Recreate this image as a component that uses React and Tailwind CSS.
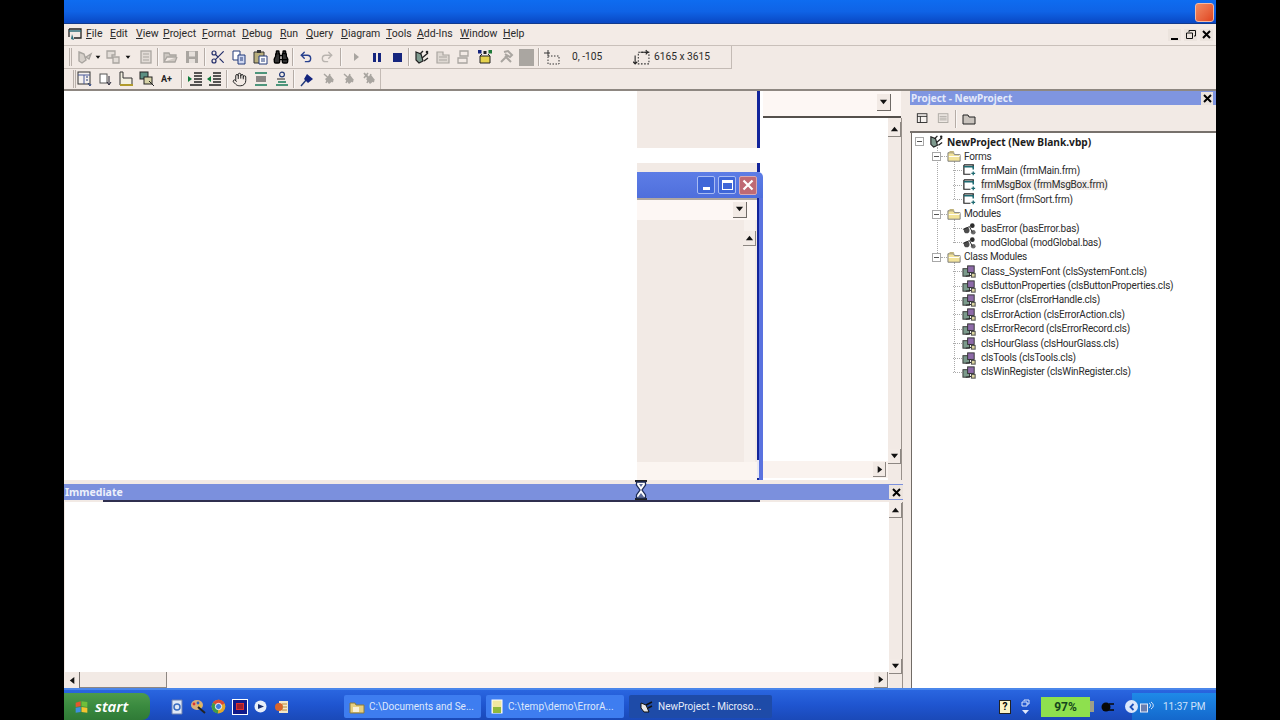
import React from 'react';
import { Scissors, Binoculars, Undo2, Redo2, Hand } from 'lucide-react';

const U = ({ children }) => <span className="underline underline-offset-1">{children}</span>;

const menu = [
  ['w-[24px]', 'F', 'ile'], ['w-[26px]', 'E', 'dit'], ['w-[27px]', 'V', 'iew'], ['w-[39px]', 'P', 'roject'],
  ['w-[40px]', 'F', 'ormat'], ['w-[38px]', 'D', 'ebug'], ['w-[26px]', 'R', 'un'], ['w-[35px]', 'Q', 'uery'],
  ['w-[45px]', 'D', 'iagram'], ['w-[31px]', 'T', 'ools'], ['w-[43px]', 'A', 'dd-Ins'], ['w-[43px]', 'W', 'indow'], ['w-[24px]', 'H', 'elp'],
];

const S = ({ children, className = 'w-[21px]' }) => <div className={`flex h-[22px] shrink-0 items-center justify-center ${className}`}>{children}</div>;
const Sep = ({ className = '' }) => <div className={`h-[18px] w-[2px] shrink-0 border-l border-[#b5aca6] bg-white/60 ${className}`} />;
const Grip = () => <div className="ml-[2px] h-[18px] w-[3px] shrink-0 border-l border-r border-[#b9b0aa]" />;
const Svg = ({ children, s = 16 }) => <svg width={s} height={s} viewBox="0 0 16 16" fill="none">{children}</svg>;
const Arrow = ({ dir = 'down', className = '' }) => {
  const p = { down: 'M1 2h8L5 7z', up: 'M1 7h8L5 2z', left: 'M7 1v8L2 5z', right: 'M3 1v8l5-4z' }[dir];
  return <svg width="9" height="9" viewBox="0 0 10 10" className={className}><path d={p} fill="#111" /></svg>;
};
const Grey = '#a9a5a0';
const IProj = () => <Svg><path d="M2 3l5 2 2 6-4 3-3-2zM9 8l5-3-2 5z" stroke={Grey} strokeWidth="1.4" fill="#d6d0ca" /></Svg>;
const IForm = () => <Svg><path d="M2 2h8v4H7v3H2zM8 8h6v6H8z" stroke={Grey} strokeWidth="1.3" fill="#e2dcd7" /></Svg>;
const IMenu = () => <Svg><rect x="3" y="2" width="10" height="12" stroke={Grey} strokeWidth="1.3" fill="#e2dcd7" /><path d="M5 5h6M5 8h6M5 11h6" stroke={Grey} /></Svg>;
const IOpen = () => <Svg><path d="M1 13V4h5l1 2h6v2H4l-3 5h11l2-5" stroke={Grey} strokeWidth="1.3" fill="#cfc9c3" /></Svg>;
const ISave = () => <Svg><path d="M2 2h12v12H2z" fill={Grey} /><rect x="5" y="2.5" width="6" height="5" fill="#e6e0db" /><rect x="5" y="10" width="6" height="4" fill="#e6e0db" /></Svg>;
const ICopy = () => <Svg><path d="M2 2h7v9H2z" fill="#fff" stroke="#223a7a" /><path d="M7 6h7v9H7z" fill="#cfd7f0" stroke="#223a7a" /><path d="M9 9h3M9 11h3" stroke="#223a7a" /></Svg>;
const IPaste = () => <Svg><path d="M2 3h10v11H2z" fill="#b9ae7c" stroke="#333" /><rect x="5" y="1" width="4" height="3" fill="#333" /><path d="M7 7h8v8H7z" fill="#fff" stroke="#223a7a" /><path d="M9 10h4M9 12h4" stroke="#223a7a" /></Svg>;
const IPlay = () => <Svg><path d="M6 4v8l5-4z" fill={Grey} /></Svg>;
const IPause = () => <Svg><path d="M4 4h3v9H4zM9 4h3v9H9z" fill="#15257e" /></Svg>;
const IStop = () => <Svg><rect x="4" y="4" width="9" height="9" fill="#15257e" /></Svg>;
const IProjC = ({ s = 16 }) => <Svg s={s}><path d="M2 3l5 2 2 7-4 2-3-3z" fill="#7e9a8e" stroke="#222" strokeWidth="1.2" /><path d="M8 9l6-5M6 5l3-3M10 12l4-3" stroke="#222" strokeWidth="1.4" /><circle cx="13" cy="3" r="1.3" fill="#222" /></Svg>;
const IProps = () => <Svg><path d="M2 3h6v3h6v8H2z" stroke={Grey} strokeWidth="1.2" fill="#ded8d2" /><path d="M4 8h8M4 11h8" stroke={Grey} /></Svg>;
const IWin = () => <Svg><path d="M4 2h8v5H4zM2 9h9v5H2z" stroke={Grey} strokeWidth="1.3" /></Svg>;
const IBox = () => <Svg><path d="M3 7h10v7H3z" fill="#e5d24d" stroke="#222" /><path d="M3 7l2-2M13 7l-2-2" stroke="#222" /><rect x="1" y="1" width="3.5" height="3.5" fill="#15257e" /><rect x="6.5" y="2" width="3" height="3" fill="#222" /><rect x="11.5" y="1" width="3.5" height="3.5" fill="#1f7a3a" /></Svg>;
const IHammer = () => <Svg><path d="M3 13L10 6M6 3l4-1 4 4-2 2-5-3M13 13L7 7" stroke={Grey} strokeWidth="2" /></Svg>;
const IBlock = () => <svg width="15" height="17" viewBox="0 0 15 17"><rect width="15" height="17" fill="#aaa6a1" /></svg>;
const IPos = () => <Svg><path d="M0 4h6M4 1v6" stroke="#333" /><path d="M4 7h11v8H4z" stroke="#333" strokeDasharray="1.5 1.5" /></Svg>;
const ISize = () => <Svg s={17}><path d="M5 3h10v11H5z" stroke="#333" strokeDasharray="1.5 1.5" /><path d="M7 3h8M12 1l2 2-2 2M2 6v8M0 12l2 2 2-2" stroke="#222" /></Svg>;

const T2a = () => <Svg><rect x="2" y="1" width="12" height="12" fill="#f5f1ee" stroke="#333" /><path d="M2 4h12M8 4v9" stroke="#4a5a9a" /><path d="M10 6h2M10 9h2M12 12l2 3 1-2" stroke="#223a7a" /></Svg>;
const T2b = () => <Svg><rect x="3" y="3" width="7" height="9" fill="#fff" stroke="#555" /><path d="M12 5v8M10 11l2 3 2-3" stroke="#223" /></Svg>;
const T2c = () => <Svg><path d="M2 1h3v6h9v7H2z" fill="#f2efe0" stroke="#333" /><path d="M2 14h13" stroke="#b09a2c" strokeWidth="2" /></Svg>;
const T2d = () => <Svg><rect x="1" y="1" width="8" height="7" fill="#5b8f82" stroke="#222" /><rect x="5" y="6" width="8" height="7" fill="#d7d3a8" stroke="#222" /><path d="M10 10l5 5" stroke="#222" /></Svg>;
const IIndent = ({ out }) => <Svg><path d="M7 2h8M7 5h8M7 8h8M7 11h8M3 14h12" stroke="#222" strokeWidth="1.3" /><path d={out ? 'M5 5L1 8l4 3z' : 'M1 5l4 3-4 3z'} fill="#117a3c" /></Svg>;
const ILines = () => <Svg><path d="M2 2h12M2 14h12" stroke="#177a58" strokeWidth="1.6" /><path d="M3 6h10M3 8h10M3 10h10" stroke="#222" /></Svg>;
const IQuick = () => <Svg><path d="M2 14h12M4 11h8" stroke="#177a58" strokeWidth="1.6" /><path d="M3 8h8" stroke="#222" /><circle cx="8" cy="3.5" r="2.4" stroke="#223a7a" strokeWidth="1.2" /></Svg>;
const IBm = ({ grey }) => <Svg><path d="M2 15L8 8" stroke={grey ? Grey : '#223a7a'} strokeWidth="1.4" /><path d="M8 3l6 5-5 4-4-4z" fill={grey ? Grey : '#15257e'} /></Svg>;
const IGreyBm = ({ x }) => <Svg><path d="M4 3l9 8M6 12l4-9" stroke={Grey} strokeWidth="1.5" /><path d="M5 8l5-4 4 5-5 4z" fill={Grey} />{x && <path d="M3 2l4 5M7 2L3 7" stroke={Grey} strokeWidth="1.6" />}</Svg>;

const Folder = () => <Svg s={15}><path d="M1 4h6l1 2h6v7H1z" fill="#f2e39a" stroke="#777" /><path d="M2 4l1-2h4l1 2z" fill="#bfb27a" /><path d="M2 8h11l1-2" stroke="#fff" /></Svg>;
const FormI = () => <Svg s={15}><path d="M2 2h10v3M2 2v10h7" stroke="#222" strokeWidth="1.3" /><path d="M2 4h10v3" stroke="#1f6b72" strokeWidth="1.6" /><path d="M12 9v4M10 11h4" stroke="#1f6b72" strokeWidth="1.4" /></Svg>;
const ModI = () => <Svg s={15}><circle cx="5" cy="10" r="3" fill="#4c4c4c" /><circle cx="11" cy="5" r="2.5" fill="#2c2c2c" /><circle cx="12" cy="12" r="2.5" fill="#6a6a6a" /><path d="M1 9l7-3M8 6l3 6" stroke="#222" strokeWidth="1" /></Svg>;
const ClsI = () => <Svg s={15}><rect x="1" y="5" width="7" height="8" fill="#7b9a8b" stroke="#333" /><rect x="6" y="2" width="7" height="7" fill="#8d6aa8" stroke="#333" /><path d="M9 9l5 5M4 13l7-1" stroke="#222" /><rect x="10" y="10" width="4" height="4" fill="#dcd6a0" stroke="#444" /></Svg>;

const forms = [['frmMain (frmMain.frm)', false], ['frmMsgBox (frmMsgBox.frm)', true], ['frmSort (frmSort.frm)', false]];
const mods = ['basError (basError.bas)', 'modGlobal (modGlobal.bas)'];
const clss = ['Class_SystemFont (clsSystemFont.cls)', 'clsButtonProperties (clsButtonProperties.cls)', 'clsError (clsErrorHandle.cls)', 'clsErrorAction (clsErrorAction.cls)', 'clsErrorRecord (clsErrorRecord.cls)', 'clsHourGlass (clsHourGlass.cls)', 'clsTools (clsTools.cls)', 'clsWinRegister (clsWinRegister.cls)'];

const Box = () => <div className="flex h-[9px] w-[9px] shrink-0 items-center justify-center border border-[#a8a8a8] bg-white"><div className="h-px w-[5px] bg-[#555]" /></div>;
const Dash = ({ className }) => <div className={`shrink-0 border-t border-dotted border-[#aaa] ${className}`} />;

const Group = ({ label }) => (
  <div className="flex h-[14.4px] items-center pl-[19px]">
    <Box /><Dash className="w-[6px]" /><Folder /><span className="ml-[2px]">{label}</span>
  </div>
);
const Leaf = ({ icon, label, hi }) => (
  <div className="flex h-[14.4px] items-center pl-[40px]">
    <Dash className="w-[9px]" />{icon}<span className={`ml-[4px] whitespace-nowrap ${hi ? 'bg-[#f4eeea]' : ''}`}>{label}</span>
  </div>
);

const ScrollBtn = ({ dir }) => <div className="flex h-[15px] w-[13px] shrink-0 items-center justify-center border-r border-b border-[#8d8782] bg-[#f3ebe6]"><Arrow dir={dir} /></div>;

const Flag = () => <svg width="15" height="16" viewBox="0 0 18 18"><path d="M2 4l6-2v6L2 9z" fill="#e4572e" /><path d="M9 2l7 1v6l-7-1z" fill="#6fbf3a" /><path d="M2 10l6-1v6l-6 1z" fill="#3f8fe0" /><path d="M9 9l7 1v6l-7-1z" fill="#f5c430" /></svg>;
const QL = ({ children }) => <div className="flex h-[20px] w-[21px] shrink-0 items-center justify-center">{children}</div>;
const TaskBtn = ({ icon, label, active, className }) => (
  <div className={`flex h-[23px] shrink-0 items-center rounded-[2px] pl-[5px] text-[10px] ${active ? 'bg-[#1e4ba8] text-[#e6ecfa]' : 'bg-[#3e7df0] text-[#dfe8fb]'} ${className}`}>
    {icon}<span className="ml-[4px] whitespace-nowrap">{label}</span>
  </div>
);

export default function App() {
  return (
    <div className="flex h-[720px] w-[1280px] overflow-hidden bg-black font-['Roboto',sans-serif] text-[10px] leading-none text-[#2a2a2a]">
      <div className="w-[64px] shrink-0" />
      <div className="flex w-[1152px] shrink-0 flex-col bg-[#f2eae5]">
        {/* title bar */}
        <div className="flex h-[24px] shrink-0 items-start justify-end border-b border-[#123a8c] bg-gradient-to-b from-[#0e6cf0] via-[#0f63e6] to-[#0a48c4] pr-[2px] pt-[3px]">
          <div className="h-[19px] w-[19px] rounded-[3px] border border-[#f4b9a4] bg-gradient-to-br from-[#f08a63] to-[#e0431c]" />
        </div>
        {/* menu */}
        <div className="flex h-[22px] shrink-0 items-center border-b border-[#c9c0ba] bg-[#f3ebe6] pl-[4px] text-[10.5px]">
          <svg width="14" height="14" viewBox="0 0 14 14" className="mr-[4px] shrink-0"><path d="M1 1h12v9H6M1 1v8" stroke="#222" strokeWidth="1.3" fill="none" /><path d="M1 3h12" stroke="#2c6e7a" strokeWidth="1.5" /><path d="M4 6l2 6-3-1z" fill="#2c6e7a" /></svg>
          {menu.map(([w, a, b], i) => <div key={i} className={`${w} shrink-0`}><U>{a}</U>{b}</div>)}
          <div className="flex-1" />
          <div className="mr-[3px] flex items-center gap-[3px]">
            <div className="flex h-[12px] w-[13px] items-end justify-center bg-[#ece4de] pb-[1px]"><div className="h-[2px] w-[7px] bg-black" /></div>
            <div className="flex h-[12px] w-[13px] items-center justify-center bg-[#ece4de]"><svg width="10" height="9" viewBox="0 0 10 9" fill="none"><path d="M3 2V0.5h6.5V6H8M0.5 3h6v5.5h-6z" stroke="#111" /></svg></div>
            <div className="flex h-[12px] w-[13px] items-center justify-center bg-[#ece4de]"><svg width="9" height="9" viewBox="0 0 9 9"><path d="M1 1l7 7M8 1L1 8" stroke="#000" strokeWidth="2" /></svg></div>
          </div>
        </div>
        {/* toolbar 1 */}
        <div className="flex h-[23px] shrink-0 items-center">
          <div className="flex h-[23px] w-[668px] shrink-0 items-center border-r border-b border-[#c4bbb5] pl-[3px] text-[10.2px]">
            <Grip />
            <S className="ml-[2px] w-[21px]"><IProj /></S><S className="w-[6px]"><Arrow /></S>
            <S className="ml-[2px] w-[20px]"><IForm /></S><S className="ml-[2px] w-[6px]"><Arrow /></S>
            <S className="ml-[4px] w-[21px]"><IMenu /></S><Sep className="mx-[1px]" />
            <S><IOpen /></S><S><ISave /></S><Sep className="ml-[2px] mr-[1px]" />
            <S><Scissors size={16} color="#222d6a" strokeWidth={1.8} /></S><S><ICopy /></S><S><IPaste /></S><S><Binoculars size={16} color="#000" fill="#333" strokeWidth={2} /></S><Sep className="mx-[1px]" />
            <S><Undo2 size={14} color="#27408e" strokeWidth={2.4} /></S><S><Redo2 size={14} color="#b9b4af" strokeWidth={2.4} /></S><Sep className="mx-[3px]" />
            <S className="w-[21px]"><IPlay /></S><S><IPause /></S><S className="w-[20px]"><IStop /></S><Sep className="mx-[1px]" />
            <S><IProjC /></S><S><IProps /></S><S><IWin /></S><S><IBox /></S><S><IHammer /></S><S><IBlock /></S><Sep className="mx-[1px]" />
            <S className="w-[21px]"><IPos /></S>
            <div className="ml-[10px] w-[58px] shrink-0">0, -105</div>
            <S className="w-[22px]"><ISize /></S>
            <div className="ml-[2px] whitespace-nowrap">6165 x 3615</div>
          </div>
        </div>
        {/* toolbar 2 */}
        <div className="flex h-[22px] shrink-0 items-center border-b-2 border-[#8e8781]">
          <div className="flex h-[20px] w-[317px] shrink-0 items-center border-r border-[#c4bbb5] pl-[7px]">
            <Grip />
            <S className="w-[17px] ml-[-1px]"><T2a /></S><S className="ml-[2px] w-[21px]"><T2b /></S><S><T2c /></S><S><T2d /></S>
            <S className="w-[19px] text-[9px] font-bold text-[#222]">A+</S><Sep className="mx-[5px]" />
            <S className="ml-[-1px]"><IIndent /></S><S><IIndent out /></S><Sep className="mx-[1.5px]" />
            <S><Hand size={15} color="#222" strokeWidth={1.6} /></S><S><ILines /></S><S><IQuick /></S><Sep className="mx-[1px]" />
            <S><IBm /></S><S><IGreyBm /></S><S className="w-[20px]"><IGreyBm /></S><S><IGreyBm x /></S>
          </div>
        </div>
        {/* main */}
        <div className="flex min-h-0 flex-1">
          <div className="flex w-[846px] shrink-0 flex-col">
            {/* MDI area */}
            <div className="flex h-[389px] shrink-0 bg-white">
              <div className="ml-px w-[572px] shrink-0 bg-white" />
              <div className="flex w-[126px] shrink-0 flex-col">
                <div className="flex h-[81px] shrink-0">
                  <div className="flex w-[120px] flex-col">
                    <div className="h-[57px] bg-[#f2eae5]" />
                    <div className="h-[15px] bg-white" />
                    <div className="flex-1 bg-[#f2eae5]" />
                  </div>
                  <div className="flex w-[3px] flex-col">
                    <div className="h-[57px] bg-[#12249a]" />
                    <div className="h-[15px] bg-white" />
                    <div className="flex-1 bg-[#12249a]" />
                  </div>
                </div>
                <div className="flex h-[26px] shrink-0 items-center justify-end gap-[3px] rounded-tr-[5px] bg-gradient-to-b from-[#5d7de6] to-[#4f6fdc] pr-[6px]">
                  <div className="flex h-[18px] w-[18px] items-end justify-center rounded-[2px] border border-[#a9bcf3] bg-[#3f66d8] pb-[3px]"><div className="h-[3px] w-[7px] bg-white" /></div>
                  <div className="flex h-[18px] w-[18px] items-center justify-center rounded-[2px] border border-[#a9bcf3] bg-[#3f66d8]"><div className="h-[10px] w-[11px] border border-t-[3px] border-white" /></div>
                  <div className="flex h-[19px] w-[18px] items-center justify-center rounded-[2px] border border-[#d9a9b0] bg-[#bf6a74]"><svg width="12" height="12" viewBox="0 0 12 12"><path d="M1.5 1.5l9 9M10.5 1.5l-9 9" stroke="#fff" strokeWidth="2.2" /></svg></div>
                </div>
                <div className="flex min-h-0 flex-1">
                  <div className="flex w-[120px] shrink-0 flex-col">
                    <div className="flex h-[22px] shrink-0 items-center justify-end border-t-2 border-[#b0a8a2] bg-[#fdf7f4] pr-[10px]">
                      <div className="flex h-[16px] w-[14px] items-center justify-center border-r border-b border-[#6f6a66] bg-[#f2eae5]"><Arrow /></div>
                    </div>
                    <div className="flex h-[242px] shrink-0 justify-end bg-[#f2eae5] pr-[2px]">
                      <div className="flex w-[11px] flex-col items-center bg-[#f7f1ed] pt-[11px]"><ScrollBtn dir="up" /></div>
                    </div>
                    <div className="flex-1 bg-[#fbf5f1]" />
                  </div>
                  <div className="flex w-[6px] shrink-0">
                    <div className="flex h-full w-[2px] flex-col">
                      <div className="flex-1 bg-[#12249a]" />
                      <div className="h-[18px] bg-[#e8e8f4]" />
                      <div className="h-[2px] bg-[#12249a]" />
                    </div>
                    <div className="h-full w-[4px] bg-[#5a72df]" />
                  </div>
                </div>
              </div>
              {/* code window right */}
              <div className="flex w-[147px] shrink-0 flex-col">
                <div className="flex h-[27px] shrink-0">
                  <div className="flex w-[138px] shrink-0 items-center border-b-2 border-[#55504c] bg-[#fdf7f4] pb-[3px]">
                    <div className="flex w-[128px] justify-end pt-[1px]">
                      <div className="flex h-[17px] w-[14px] items-center justify-center border-r border-b border-[#6f6a66] bg-[#f2eae5]"><Arrow /></div>
                    </div>
                  </div>
                  <div className="flex-1 bg-[#f2eae5]" />
                </div>
                <div className="flex min-h-0 flex-1">
                  <div className="flex w-[125px] shrink-0 flex-col">
                    <div className="flex-1 bg-white" />
                    <div className="mb-[2px] flex h-[17px] shrink-0 items-center justify-end bg-[#faf3ef] pr-[2px]">
                      <div className="flex h-[15px] w-[13px] items-center justify-center border-r border-b border-[#8d8782] bg-[#f2eae5]"><Arrow dir="right" /></div>
                    </div>
                  </div>
                  <div className="flex w-[13px] shrink-0 flex-col items-center bg-[#f2eae5] pb-[16px] pt-[4px]">
                    <ScrollBtn dir="up" />
                    <div className="flex-1" />
                    <ScrollBtn dir="down" />
                  </div>
                  <div className="w-px shrink-0 bg-[#99918b]" />
                  <div className="flex-1 bg-[#f2eae5]" />
                </div>
              </div>
            </div>
            {/* strip + immediate */}
            <div className="relative flex min-h-0 flex-1 flex-col pt-[4px]">
              <svg width="14" height="20" viewBox="0 0 14 20" className="absolute left-[570px] top-0">
                <path d="M1 1h12M1 19h12" stroke="#222" strokeWidth="2" />
                <path d="M2.5 2h9v3L8 10l3.5 5v3h-9v-3L6 10 2.5 5z" fill="#fff" stroke="#1b2a55" strokeWidth="1.3" />
                <path d="M4 17h6l-3-4zM5 4h4L7 7z" fill="#5a6a9a" />
              </svg>
              <div className="mr-[7px] flex h-[16px] shrink-0 items-center bg-[#7b90dd]">
                <div className="ml-px flex-1 font-['Noto_Sans',sans-serif] text-[10.5px] font-bold text-[#eef1fb]">Immediate</div>
                <div className="flex h-[14px] w-[14px] items-center justify-center bg-[#ece4de]"><svg width="9" height="9" viewBox="0 0 9 9"><path d="M1 1l7 7M8 1L1 8" stroke="#000" strokeWidth="2" /></svg></div>
              </div>
              <div className="flex h-[2px] shrink-0">
                <div className="ml-[39px] h-[2px] w-[657px] bg-[#2f2f4f]" />
              </div>
              <div className="flex min-h-0 flex-1">
                <div className="ml-px flex w-[824px] shrink-0 flex-col">
                  <div className="flex-1 bg-white" />
                  <div className="flex h-[16px] shrink-0 items-center bg-[#fbf3f0]">
                    <div className="flex h-[16px] w-[15px] items-center justify-center border-r border-[#77726e] bg-[#f2eae5]"><Arrow dir="left" /></div>
                    <div className="h-[16px] w-[87px] border-r border-b border-[#8d8782] bg-[#f2eae5]" />
                    <div className="flex-1" />
                    <div className="mr-[1px] flex h-[16px] w-[14px] items-center justify-center border-r border-b border-[#8d8782] bg-[#f2eae5]"><Arrow dir="right" /></div>
                  </div>
                </div>
                <div className="flex w-[13px] shrink-0 flex-col items-center bg-[#f2eae5] pb-[14px] pt-px">
                  <ScrollBtn dir="up" />
                  <div className="flex-1" />
                  <ScrollBtn dir="down" />
                </div>
                <div className="w-px shrink-0 bg-[#99918b]" />
                <div className="flex-1 bg-[#f2eae5]" />
              </div>
            </div>
          </div>
          {/* project panel */}
          <div className="flex w-[306px] shrink-0 flex-col">
            <div className="flex h-[14px] shrink-0 items-center justify-between bg-[#7f95e0] pl-px pr-[3px] font-['Noto_Sans',sans-serif] text-[10px] font-bold text-[#e4e9fa]">
              <span className="-mt-[1px]">Project - NewProject</span>
              <div className="flex h-[13px] w-[12px] items-center justify-center bg-[#ece4de]"><svg width="9" height="9" viewBox="0 0 9 9"><path d="M1 1l7 7M8 1L1 8" stroke="#000" strokeWidth="2" /></svg></div>
            </div>
            <div className="flex h-[28px] shrink-0 items-center border-b-2 border-[#77716c] pl-[2px] pt-[2px]">
              <S><Svg s={14}><rect x="1.5" y="2" width="11" height="10" fill="#f5f1ee" stroke="#222" /><path d="M1.5 5h11M5 5v7" stroke="#222" /></Svg></S>
              <S><Svg s={14}><rect x="1.5" y="2" width="11" height="10" fill="#eee8e3" stroke={Grey} /><path d="M3 5h8M3 7h8M3 9h8" stroke={Grey} /></Svg></S>
              <Sep className="mx-[1px]" />
              <S className="w-[21px]"><Svg><path d="M2 4h5l1 2h6v7H2z" fill="#c9c3bd" stroke="#222" /></Svg></S>
            </div>
            <div className="min-h-0 flex-1 pl-[1px]">
              <div className="relative h-full border-l border-[#716b66] bg-white pl-px pt-[1px] tracking-[-0.2px] text-[#2c2c2c]">
                <div className="absolute left-[25px] top-[14px] h-[106px] border-l border-dotted border-[#aaa]" />
                <div className="absolute left-[42px] top-[28px] h-[38px] border-l border-dotted border-[#aaa]" />
                <div className="absolute left-[42px] top-[86px] h-[24px] border-l border-dotted border-[#aaa]" />
                <div className="absolute left-[42px] top-[129px] h-[110px] border-l border-dotted border-[#aaa]" />
                <div className="relative">
                  <div className="flex h-[15.4px] items-center pl-[2px]">
                    <Box /><div className="ml-[5px] w-[15px] shrink-0"><IProjC s={15} /></div>
                    <span className="ml-[3px] font-['Noto_Sans',sans-serif] text-[10.2px] font-bold tracking-normal text-[#1c1c1c]">NewProject (New Blank.vbp)</span>
                  </div>
                  <Group label="Forms" />
                  {forms.map(([l, h]) => <Leaf key={l} icon={<FormI />} label={l} hi={h} />)}
                  <Group label="Modules" />
                  {mods.map((l) => <Leaf key={l} icon={<ModI />} label={l} />)}
                  <Group label="Class Modules" />
                  {clss.map((l) => <Leaf key={l} icon={<ClsI />} label={l} />)}
                </div>
              </div>
            </div>
          </div>
        </div>
        {/* taskbar */}
        <div className="flex h-[32px] shrink-0 items-center border-t-2 border-[#4a86ea] bg-gradient-to-b from-[#2a66e0] via-[#1f55d0] to-[#1a49b8] pt-[3px]">
          <div className="flex h-[27px] w-[86px] shrink-0 items-center rounded-r-[8px] bg-gradient-to-b from-[#4c9a4c] via-[#3a8a3f] to-[#2f7a36] pl-[10px]">
            <Flag />
            <span className="ml-[6px] font-['Noto_Sans',sans-serif] text-[15px] font-semibold italic text-white">start</span>
          </div>
          <div className="ml-[16px] flex shrink-0 items-center">
            <QL><svg width="14" height="16" viewBox="0 0 14 16"><path d="M2 1h10v14H2z" fill="#dfe8f6" stroke="#6a7fb0" /><circle cx="7" cy="8" r="3" stroke="#3a6cc0" strokeWidth="1.5" fill="none" /></svg></QL>
            <QL><svg width="16" height="15" viewBox="0 0 16 15"><ellipse cx="7" cy="6" rx="6" ry="5" fill="#d9b07a" /><circle cx="4" cy="5" r="1.4" fill="#d33" /><circle cx="8" cy="4" r="1.4" fill="#2a62c8" /><circle cx="10" cy="7" r="1.4" fill="#e8c02c" /><path d="M8 8l7 6" stroke="#222" strokeWidth="2" /></svg></QL>
            <QL><svg width="15" height="15" viewBox="0 0 24 24"><circle cx="12" cy="12" r="11" fill="#e0a92c" /><path d="M12 12L3 6a11 11 0 0 1 19 1z" fill="#d94a38" /><path d="M12 12l-9-6a11 11 0 0 0 8 17z" fill="#3f9a4a" /><circle cx="12" cy="12" r="5" fill="#3d7ce0" stroke="#fff" strokeWidth="1.5" /></svg></QL>
            <QL><div className="flex h-[16px] w-[16px] items-center justify-center border border-white bg-[#101a8a]"><div className="h-[7px] w-[8px] border border-[#e03030] bg-[#a02030]" /></div></QL>
            <QL><svg width="15" height="15" viewBox="0 0 15 15"><circle cx="7.5" cy="7.5" r="6" fill="#e8eef8" /><path d="M5 5l6 2.5L5 10z" fill="#1a2f70" /></svg></QL>
            <QL><svg width="15" height="15" viewBox="0 0 15 15"><rect x="5" y="2" width="9" height="12" fill="#f2e7c8" /><circle cx="5" cy="8" r="4" fill="#d8642c" /><path d="M8 5h5M8 8h5M8 11h5" stroke="#b88a3a" /></svg></QL>
          </div>
          <div className="ml-[52px] flex items-center gap-[5px]">
            <TaskBtn className="w-[137px]" label="C:\Documents and Se..." icon={<svg width="16" height="14" viewBox="0 0 16 14"><path d="M1 3h5l1 2h8v8H1z" fill="#e6cf80" stroke="#8a7a3a" /><path d="M4 7h6v5H4z" fill="#fff" opacity="0.7" /></svg>} />
            <TaskBtn className="w-[138px]" label="C:\temp\demo\ErrorA..." icon={<svg width="13" height="15" viewBox="0 0 13 15"><rect x="1" y="1" width="10" height="13" fill="#f0e7a0" stroke="#fff" /><rect x="2" y="8" width="8" height="6" fill="#8fb83c" /></svg>} />
            <TaskBtn active className="w-[143px] pl-[10px]" label="NewProject - Microso..." icon={<svg width="15" height="15" viewBox="0 0 15 15"><path d="M2 4l5 2 3 7H5L2 9z" fill="#e8e8e8" stroke="#111" /><path d="M7 6l6-3M9 9l4-2" stroke="#111" strokeWidth="1.5" /></svg>} />
          </div>
          <div className="flex-1" />
          <div className="flex h-[14px] w-[12px] shrink-0 items-center justify-center border border-[#222] bg-[#fbf3c8] text-[10px] font-bold text-black">?</div>
          <div className="ml-[4px] flex w-[20px] shrink-0 flex-col items-center gap-[3px]">
            <svg width="9" height="8" viewBox="0 0 9 8" fill="none"><path d="M3 2V1h5v4H6M1 3h5v4H1z" stroke="#dfe8fb" /></svg>
            <svg width="7" height="4" viewBox="0 0 7 4"><path d="M0 0h7L3.5 4z" fill="#dfe8fb" /></svg>
          </div>
          <div className="ml-[6px] flex h-[20px] w-[49px] shrink-0 items-center justify-center bg-[#8ee04e] text-[12px] font-bold text-[#15451c]">97%</div>
          <div className="h-[11px] w-[4px] shrink-0 bg-[#9d9f88]" />
          <div className="ml-[7px] flex shrink-0 items-center">
            <svg width="14" height="12" viewBox="0 0 14 12"><circle cx="5" cy="6" r="4.5" fill="#080808" /><path d="M8 3h5M8 9h5" stroke="#080808" strokeWidth="1.6" /></svg>
          </div>
          <div className="relative z-10 ml-[10px] flex h-[13px] w-[13px] shrink-0 items-center justify-center rounded-full bg-[#dbe7fb]"><svg width="8" height="8" viewBox="0 0 8 8" fill="none"><path d="M5.5 1L2.5 4l3 3" stroke="#1c50b8" strokeWidth="1.8" /></svg></div>
          <div className="-ml-[6px] flex h-[27px] w-[84px] shrink-0 items-center bg-gradient-to-b from-[#1f8ae8] to-[#1468cc] pl-[8px] text-[10px] text-[#cfe2fb]">
            <svg width="14" height="12" viewBox="0 0 14 12" className="shrink-0" fill="none"><rect x="0.5" y="3" width="7" height="8" fill="#6b7fb0" stroke="#e6ecfa" /><path d="M9 2c2 1 2 3 0 5M11 1c3 2 3 5 0 7" stroke="#e6ecfa" /></svg>
            <span className="ml-[9px] whitespace-nowrap">11:37 PM</span>
          </div>
        </div>
      </div>
      <div className="w-[64px] shrink-0" />
    </div>
  );
}
